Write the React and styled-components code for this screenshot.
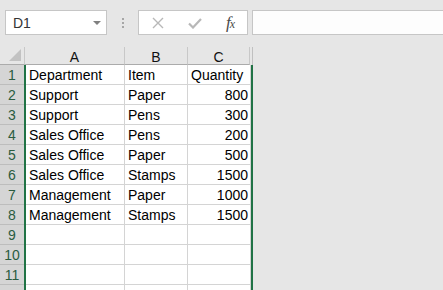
import styled, { createGlobalStyle } from "styled-components";

const Global = createGlobalStyle`
  html, body {
    margin: 0;
    padding: 0;
    background: #e6e6e6;
    overflow: hidden;
  }
  * {
    box-sizing: border-box;
  }
`;

const Window = styled.div`
  width: 443px;
  height: 290px;
  background: #e6e6e6;
  font-family: "Liberation Sans", Arial, sans-serif;
  overflow: hidden;
`;

const FormulaBar = styled.div`
  display: flex;
  align-items: center;
  height: 47px;
  padding: 10px 0 12px 5px;
`;

const NameBox = styled.div`
  display: flex;
  align-items: center;
  justify-content: space-between;
  width: 102px;
  height: 25px;
  padding: 0 5px 0 7px;
  background: #fff;
  border: 1px solid #c6c6c6;
  font-size: 14px;
  color: #333;
`;

const Caret = styled.span`
  width: 0;
  height: 0;
  border-left: 4px solid transparent;
  border-right: 4px solid transparent;
  border-top: 4px solid #808080;
`;

const Grip = styled.div`
  display: flex;
  flex-direction: column;
  gap: 2px;
  margin: 0 14px 0 15px;

  & > span {
    width: 2px;
    height: 2px;
    background: #a6a6a6;
  }
`;

const ButtonBox = styled.div`
  display: flex;
  align-items: center;
  width: 110px;
  height: 25px;
  background: #fff;
  border: 1px solid #c6c6c6;
`;

const BarButton = styled.div`
  display: flex;
  align-items: center;
  justify-content: center;
  width: ${({ $w }) => $w}px;
  height: 100%;
`;

const Fx = styled.span`
  font-family: "Liberation Serif", "Times New Roman", serif;
  font-style: italic;
  font-size: 17px;
  color: #4a4a4a;
  letter-spacing: -1px;
  line-height: 1;

  & > small {
    font-size: 12px;
  }
`;

const Input = styled.div`
  flex: 1;
  height: 25px;
  margin-left: 4px;
  margin-right: -2px;
  background: #fdfdfd;
  border: 1px solid #c6c6c6;
`;

const HeaderRow = styled.div`
  display: flex;
  height: 18px;
`;

const Corner = styled.div`
  position: relative;
  width: 25px;
  border-right: 1px solid #c8c8c8;
  border-bottom: 1px solid #ababab;

  &::after {
    content: "";
    position: absolute;
    right: 3px;
    bottom: 3px;
    width: 0;
    height: 0;
    border-left: 12px solid transparent;
    border-bottom: 12px solid #c2c2c2;
  }
`;

const ColHead = styled.div`
  display: flex;
  align-items: center;
  justify-content: center;
  width: ${({ $w }) => $w}px;
  border-right: 1px solid #c8c8c8;
  border-bottom: 1px solid #ababab;
  font-size: 14px;
  color: #111;
  padding-top: 2px;
`;

const EndMark = styled.div`
  width: 3px;
  border-right: 1px solid #c0c0c0;
`;

const Body = styled.div`
  display: flex;
`;

const RowHeads = styled.div`
  display: flex;
  flex-direction: column;
  width: 24px;
`;

const RowHead = styled.div`
  height: 20px;
  display: flex;
  align-items: center;
  justify-content: center;
  background: #d5d5d5;
  border-bottom: 1px solid #bdbdbd;
  font-size: 14px;
  color: #2a5c3f;
  padding-top: 1px;
`;

const Data = styled.div`
  display: flex;
  flex-direction: column;
  border-left: 2px solid #217346;
  border-right: 2px solid #217346;
  background: #fff;
`;

const Row = styled.div`
  display: flex;
  height: 20px;
`;

const Cell = styled.div`
  width: ${({ $w }) => $w}px;
  height: 20px;
  padding: 2px ${({ $num }) => ($num ? "2px" : "0")} 0 3px;
  border-right: 1px solid #d4d4d4;
  border-bottom: 1px solid #d4d4d4;
  text-align: ${({ $num }) => ($num ? "right" : "left")};
  font-size: 14px;
  line-height: 17px;
  color: #000;
  white-space: nowrap;
  overflow: hidden;
`;

const columns = [
  { name: "A", head: 100, cell: 99 },
  { name: "B", head: 63, cell: 63 },
  { name: "C", head: 62, cell: 63 },
];

const rows = [
  ["Department", "Item", "Quantity"],
  ["Support", "Paper", 800],
  ["Support", "Pens", 300],
  ["Sales Office", "Pens", 200],
  ["Sales Office", "Paper", 500],
  ["Sales Office", "Stamps", 1500],
  ["Management", "Paper", 1000],
  ["Management", "Stamps", 1500],
  ["", "", ""],
  ["", "", ""],
  ["", "", ""],
  ["", "", ""],
];

export default function App() {
  return (
    <Window>
      <Global />
      <FormulaBar>
        <NameBox>
          <span>D1</span>
          <Caret />
        </NameBox>
        <Grip>
          <span />
          <span />
          <span />
        </Grip>
        <ButtonBox>
          <BarButton $w={38}>
            <svg width="12" height="12" viewBox="0 0 12 12">
              <path d="M1 1 L11 11 M11 1 L1 11" stroke="#b8b8b8" strokeWidth="1.4" />
            </svg>
          </BarButton>
          <BarButton $w={36}>
            <svg width="14" height="12" viewBox="0 0 14 12">
              <path d="M1 6.5 L5 10.5 L13 2" fill="none" stroke="#b8b8b8" strokeWidth="2.2" />
            </svg>
          </BarButton>
          <BarButton $w={34}>
            <Fx>
              f<small>x</small>
            </Fx>
          </BarButton>
        </ButtonBox>
        <Input />
      </FormulaBar>
      <HeaderRow>
        <Corner />
        {columns.map((c) => (
          <ColHead key={c.name} $w={c.head}>
            {c.name}
          </ColHead>
        ))}
        <EndMark />
      </HeaderRow>
      <Body>
        <RowHeads>
          {rows.map((_, i) => (
            <RowHead key={i}>{i < 11 ? i + 1 : ""}</RowHead>
          ))}
        </RowHeads>
        <Data>
          {rows.map((r, i) => (
            <Row key={i}>
              {r.map((v, j) => (
                <Cell key={j} $w={columns[j].cell} $num={typeof v === "number"}>
                  {v}
                </Cell>
              ))}
            </Row>
          ))}
        </Data>
      </Body>
    </Window>
  );
}
